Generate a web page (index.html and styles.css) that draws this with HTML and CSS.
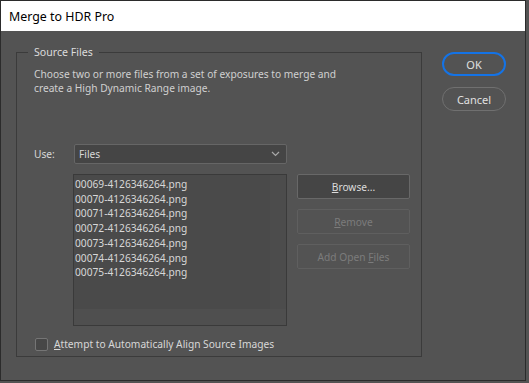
FILE: index.html
```html
<!DOCTYPE html>
<html lang="en">
<head>
  <meta charset="UTF-8" />
  <title>Merge to HDR Pro</title>
  <link rel="stylesheet" href="styles.css">
</head>
<body>

  <div class="window">
    <div class="titlebar">Merge to HDR Pro</div>

    <div class="dialog">
      <fieldset class="group">
        <legend>Source Files</legend>
        <p class="intro">Choose two or more files from a set of exposures to merge and<br>create a High Dynamic Range image.</p>

        <div class="source-grid">
          <label class="use-label">Use:</label>
          <div class="select">
            <span>Files</span>
            <svg class="chevron" width="9" height="6" viewBox="0 0 9 6">
              <polyline points="1,1 4.5,4.5 8,1" fill="none" stroke="#a8a8a8" stroke-width="1.2"/>
            </svg>
          </div>

          <div class="file-list">
            <div class="files">
              <div class="file">00069-4126346264.png</div>
              <div class="file">00070-4126346264.png</div>
              <div class="file">00071-4126346264.png</div>
              <div class="file">00072-4126346264.png</div>
              <div class="file">00073-4126346264.png</div>
              <div class="file">00074-4126346264.png</div>
              <div class="file">00075-4126346264.png</div>
            </div>
            <div class="vtrack"></div>
            <div class="htrack"></div>
          </div>
          <div class="list-buttons">
            <button class="btn"><u>B</u>rowse...</button>
            <button class="btn" disabled><u>R</u>emove</button>
            <button class="btn" disabled>Add Open <u>F</u>iles</button>
          </div>
        </div>

        <label class="check">
          <span class="box"></span>
          <span><u>A</u>ttempt to Automatically Align Source Images</span>
        </label>
      </fieldset>

      <div class="actions">
        <button class="pill ok">OK</button>
        <button class="pill">Cancel</button>
      </div>
    </div>
  </div>

</body>
</html>
```

FILE: styles.css
```css
* {
  margin: 0;
  padding: 0;
  box-sizing: border-box;
}

body {
  background: #535353;
  font-family: 'Noto Sans', 'Liberation Sans', sans-serif;
  font-size: 10.2px;
  color: #d8d8d8;
}

.window {
  width: 526px;
  height: 381px;
  border: 1px solid #2b2b2b;
  background: #535353;
}

.titlebar {
  height: 30px;
  background: #fff;
  color: #000;
  font-size: 12.4px;
  padding: 7px 0 0 8px;
}

.dialog {
  display: flex;
  align-items: flex-start;
}

/* Source Files group */
.group {
  width: 406px;
  height: 312px;
  margin: 14px 0 0 15px;
  border: 1px solid #3b3b3b;
  padding: 0 0 0 11px;
}

.group legend {
  padding: 0 6px;
  font-size: 10.6px;
  color: #dcdcdc;
}

.intro {
  margin: 8px 0 0 6px;
  line-height: 14px;
  color: #d0d0d0;
}

.source-grid {
  display: grid;
  grid-template-columns: 29px 214px 113px;
  column-gap: 10px;
  row-gap: 10px;
  margin: 49px 0 0 6px;
}

.use-label {
  align-self: center;
}

.select {
  margin-left: 1px;
  height: 20px;
  background: #454545;
  border: 1px solid #666;
  border-radius: 2px;
  display: flex;
  align-items: center;
  justify-content: space-between;
  padding: 0 6px 0 4px;
}

.file-list {
  grid-column: 2;
  height: 152px;
  background: #4a4a4a;
  border: 1px solid #3a3a3a;
  display: grid;
  grid-template-columns: 1fr 16px;
  grid-template-rows: 1fr 16px;
}

.files {
  padding: 2px 0 0 1px;
  line-height: 14.7px;
}

.vtrack {
  background: #4c4c4c;
}

.htrack {
  grid-column: 1 / 3;
  background: #4f4f4f;
}

.list-buttons {
  display: flex;
  flex-direction: column;
  gap: 10px;
}

.btn {
  height: 25px;
  font: inherit;
  color: #dcdcdc;
  background: #454545;
  border: 1px solid #686868;
  border-radius: 2px;
}

.btn:disabled {
  background: #535353;
  border-color: #5f5f5f;
  color: #7c7c7c;
}

.check {
  display: flex;
  align-items: center;
  gap: 6px;
  margin: 11px 0 0 7px;
}

.check .box {
  width: 13px;
  height: 13px;
  background: #474747;
  border: 1px solid #757575;
  border-radius: 2px;
}

/* OK / Cancel */
.actions {
  display: flex;
  flex-direction: column;
  gap: 11px;
  margin: 21px 0 0 20px;
}

.pill {
  width: 64px;
  height: 24px;
  font: inherit;
  font-size: 11px;
  color: #e0e0e0;
  background: #535353;
  border: 1px solid #707070;
  border-radius: 12px;
}

.pill.ok {
  border: 2px solid #1473e6;
}
```
